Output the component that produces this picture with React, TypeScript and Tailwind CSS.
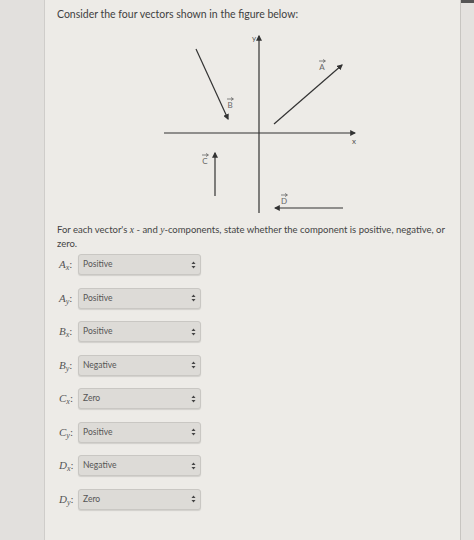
import React from 'react';

const rows = [
  { v: 'A', c: 'x', value: 'Positive' },
  { v: 'A', c: 'y', value: 'Positive' },
  { v: 'B', c: 'x', value: 'Positive' },
  { v: 'B', c: 'y', value: 'Negative' },
  { v: 'C', c: 'x', value: 'Zero' },
  { v: 'C', c: 'y', value: 'Positive' },
  { v: 'D', c: 'x', value: 'Negative' },
  { v: 'D', c: 'y', value: 'Zero' },
];

function VecLabel({ x, y, letter }: { x: number; y: number; letter: string }) {
  return (
    <g>
      <line x1={x - 3} y1={y - 9} x2={x + 3} y2={y - 9} stroke="#666" strokeWidth="0.8" />
      <path d={`M${x + 1} ${y - 10.5} L${x + 3.5} ${y - 9} L${x + 1} ${y - 7.5}`} fill="none" stroke="#666" strokeWidth="0.8" />
      <text x={x} y={y} fontSize="8" fill="#666" textAnchor="middle" fontFamily="Lato, sans-serif">{letter}</text>
    </g>
  );
}

// figure: origin of svg placed at page (158, 30)
function Figure() {
  const ox = 158;
  const oy = 30;
  const p = (x: number, y: number) => `${x - ox},${y - oy}`;
  return (
    <svg width="210" height="188" viewBox="0 0 210 188" className="block">
      <defs>
        <marker id="ah" viewBox="0 0 10 10" refX="8" refY="5" markerWidth="5" markerHeight="5" orient="auto-start-reverse">
          <path d="M0 0 L10 5 L0 10 z" fill="#333" />
        </marker>
      </defs>
      {/* axes */}
      <polyline points={`${p(260, 213)} ${p(260, 36)}`} stroke="#333" strokeWidth="1.2" fill="none" markerEnd="url(#ah)" />
      <polyline points={`${p(165, 133)} ${p(356, 133)}`} stroke="#333" strokeWidth="1.2" fill="none" markerEnd="url(#ah)" />
      <text x={253 - ox} y={41 - oy} fontSize="8" fill="#555" fontFamily="Lato, sans-serif">y</text>
      <text x={353 - ox} y={144 - oy} fontSize="8" fill="#555" fontFamily="Lato, sans-serif">x</text>
      {/* A */}
      <polyline points={`${p(275, 124)} ${p(343, 65)}`} stroke="#333" strokeWidth="1.2" fill="none" markerEnd="url(#ah)" />
      <VecLabel x={323 - ox} y={70 - oy} letter="A" />
      {/* B */}
      <polyline points={`${p(197, 49)} ${p(229, 119)}`} stroke="#333" strokeWidth="1.2" fill="none" markerEnd="url(#ah)" />
      <VecLabel x={231 - ox} y={108 - oy} letter="B" />
      {/* C */}
      <polyline points={`${p(216, 196)} ${p(216, 153)}`} stroke="#333" strokeWidth="1.2" fill="none" markerEnd="url(#ah)" />
      <VecLabel x={206 - ox} y={164 - oy} letter="C" />
      {/* D */}
      <polyline points={`${p(344, 208)} ${p(276, 208)}`} stroke="#333" strokeWidth="1.2" fill="none" markerEnd="url(#ah)" />
      <VecLabel x={285 - ox} y={204 - oy} letter="D" />
    </svg>
  );
}

function Select({ value }: { value: string }) {
  return (
    <div className="w-[123px] h-[21px] rounded-[3px] border border-[#c9c7c3] bg-[#dddbd7] shadow-[0_1px_1px_rgba(0,0,0,0.12)] flex items-center justify-between pl-[4px] pr-[4px]">
      <span className="text-[8.5px] text-[#555] leading-none">{value}</span>
      <svg width="5" height="8" viewBox="0 0 5 8">
        <path d="M0.5 3 L2.5 0.5 L4.5 3 z" fill="#444" />
        <path d="M0.5 5 L2.5 7.5 L4.5 5 z" fill="#444" />
      </svg>
    </div>
  );
}

export default function App() {
  return (
    <div className="w-[474px] h-[540px] flex overflow-hidden bg-[#e9e7e4]" style={{ fontFamily: 'Lato, "Open Sans", sans-serif' }}>
      {/* left gutter */}
      <div className="w-[45px] h-full bg-[#e2e0dd] border-r border-[#cfcdca]" />

      {/* content panel */}
      <div className="w-[416px] h-full bg-[#edebe7] border-r border-[#c7c5c1] flex flex-col pl-[12px] pt-[7px]">
        <p className="text-[10.5px] leading-[14px] text-[#3f3f3f]">Consider the four vectors shown in the figure below:</p>

        <div className="mt-[9px] ml-[100px]">
          <Figure />
        </div>

        <p className="mt-[5px] text-[9.5px] leading-[13px] text-[#444] pr-[14px]">
          For each vector's <span className="italic" style={{ fontFamily: '"Liberation Serif", serif' }}>x</span> - and{' '}
          <span className="italic" style={{ fontFamily: '"Liberation Serif", serif' }}>y</span>-components, state whether the component is positive, negative, or zero.
        </p>

        <div className="mt-[4px] flex flex-col gap-[12.5px] pl-[2px]">
          {rows.map((r, i) => (
            <div key={i} className="flex items-center">
              <span
                className="w-[19px] text-[11px] italic text-[#555] whitespace-nowrap"
                style={{ fontFamily: '"Liberation Serif", serif' }}
              >
                {r.v}
                <sub className="text-[8px]">{r.c}</sub>
                <span className="not-italic">:</span>
              </span>
              <Select value={r.value} />
            </div>
          ))}
        </div>
      </div>

      {/* right edge */}
      <div className="flex-1 h-full bg-[#e4e2df] flex flex-col">
        <div className="h-[3px] bg-[#555]" />
      </div>
    </div>
  );
}
